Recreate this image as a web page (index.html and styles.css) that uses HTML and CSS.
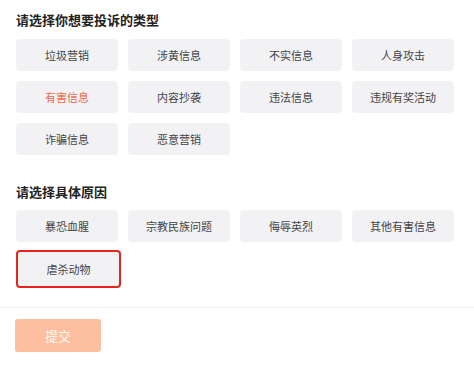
FILE: index.html
```html
<!DOCTYPE html>
<html lang="zh-CN">
<head>
    <meta charset="UTF-8">
    <meta name="viewport" content="width=device-width, initial-scale=1.0">
    <title>投诉</title>
    <link rel="stylesheet" href="styles.css">
</head>
<body>
    <div class="report">
        <div class="section">
            <h2>请选择你想要投诉的类型</h2>
            <div class="options">
                <button class="option">垃圾营销</button>
                <button class="option">涉黄信息</button>
                <button class="option">不实信息</button>
                <button class="option">人身攻击</button>
                <button class="option active">有害信息</button>
                <button class="option">内容抄袭</button>
                <button class="option">违法信息</button>
                <button class="option">违规有奖活动</button>
                <button class="option">诈骗信息</button>
                <button class="option">恶意营销</button>
            </div>
        </div>
        <div class="section second">
            <h2>请选择具体原因</h2>
            <div class="options">
                <button class="option">暴恐血腥</button>
                <button class="option">宗教民族问题</button>
                <button class="option">侮辱英烈</button>
                <button class="option">其他有害信息</button>
                <button class="option picked">虐杀动物</button>
            </div>
        </div>
        <div class="footer">
            <button class="submit" disabled>提交</button>
        </div>
    </div>
</body>
</html>
```

FILE: styles.css
```css
* {
    margin: 0;
    padding: 0;
    box-sizing: border-box;
}

body {
    font-family: "Noto Sans CJK SC", "Noto Sans", sans-serif;
    background: #fff;
    color: #333;
}

.section {
    padding: 10px 16px 0 16px;
}

.section h2 {
    font-size: 13px;
    font-weight: 700;
    line-height: 20px;
    color: #222;
    margin-bottom: 9px;
}

.second {
    padding-top: 27px;
}

.second h2 {
    margin-bottom: 8px;
}

.options {
    display: grid;
    grid-template-columns: repeat(4, 102px);
    column-gap: 10px;
    row-gap: 10px;
    align-items: start;
}

.option {
    height: 32px;
    border: none;
    border-radius: 4px;
    background: #f2f2f5;
    color: #444;
    font-family: inherit;
    font-size: 11px;
    cursor: pointer;
}

.option.active {
    color: #f2694a;
}

.option.picked {
    width: 105px;
    height: 38px;
    margin-top: -2px;
    border: 2px solid #e8231c;
    border-radius: 4px;
}

.footer {
    margin-top: 19px;
    border-top: 1px solid #f0f0f0;
    padding: 11px 15px;
}

.submit {
    width: 86px;
    height: 33px;
    border: none;
    border-radius: 3px;
    background: #fdbf9f;
    color: rgba(255, 255, 255, 0.9);
    font-family: inherit;
    font-size: 13px;
}
```
